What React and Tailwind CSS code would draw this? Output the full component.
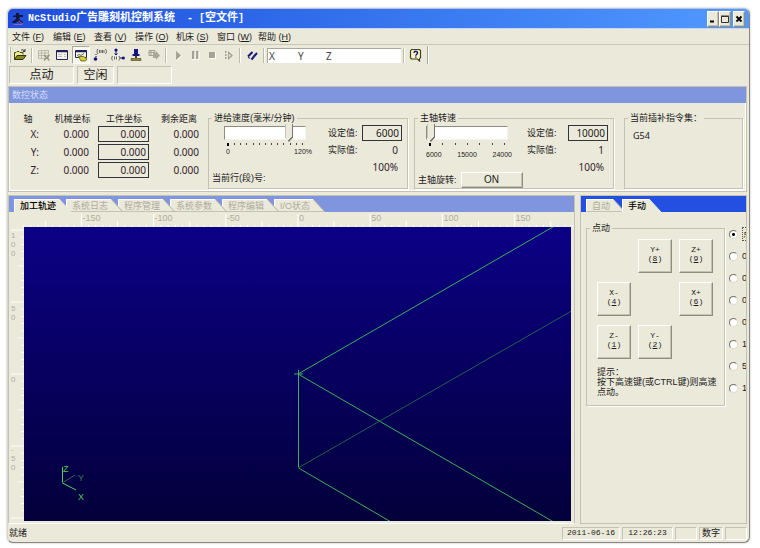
import React from "react";

const MENUS = [
  ["文件", "F"],
  ["编辑", "E"],
  ["查看", "V"],
  ["操作", "O"],
  ["机床", "S"],
  ["窗口", "W"],
  ["帮助", "H"],
];

const AXES = ["X", "Y", "Z"];

const VIEW_TABS = [
  { label: "加工轨迹", active: true, z: "z-60" },
  { label: "系统日志", z: "z-50" },
  { label: "程序管理", z: "z-40" },
  { label: "系统参数", z: "z-30" },
  { label: "程序编辑", z: "z-20" },
  { label: "I/O状态", z: "z-10" },
];

const JOG_KEYS = [
  null, ["Y+", "8"], ["Z+", "9"],
  ["X-", "4"], null, ["X+", "6"],
  ["Z-", "1"], ["Y-", "2"], null,
];

const STEPS = ["点动", "0.01", "0.05", "0.1", "0.5", "1", "5", "10"];

function Icon({ children }) {
  return (
    <svg width="14" height="14" viewBox="0 0 14 14" fill="none" aria-hidden="true" className="shrink-0">
      {children}
    </svg>
  );
}

const ICONS = {
  open: (
    <Icon>
      <path d="M1.500 11.500V4.500H3l1-1h2l1 1h3v2" fill="#f0ec90" stroke="#4a4a10" />
      <path d="M1.500 11.500l2.500-4h9l-3 4z" fill="#8a8a1c" stroke="#33330a" />
      <path d="M8 2.500c1-1.200 2.500-1 3.500.500M12 1v2.500H9.800" stroke="#222" strokeWidth=".9" />
    </Icon>
  ),
  gridOff: (
    <Icon>
      <path d="M1.500 2.500h10v8h-10zM1.500 5h10M1.500 7.500h10M4.500 3v7.500M8 3v7.500" stroke="#bcbaac" />
      <path d="M7 7l5.500 5.500M12.500 7L7 12.500" stroke="#949284" strokeWidth="1.300" />
    </Icon>
  ),
  window: (
    <Icon>
      <path d="M1.500 2.500h11v9h-11z" fill="#f4f3ea" stroke="#25254e" />
      <path d="M1 3.500h12" stroke="#1c1c5e" strokeWidth="1.600" />
      <path d="M3 6.500h4M3 8.500h4M9 6.500h2M9 8.500h2" stroke="#bbb" />
    </Icon>
  ),
  trace: (
    <Icon>
      <path d="M1.500 2.500h11v7h-11z" fill="#f4f3ea" stroke="#25254e" />
      <path d="M1 3.500h12" stroke="#1c1c5e" strokeWidth="1.500" />
      <path d="M3 7.500l2-1 2 1 3-2" stroke="#666" />
      <path d="M4.500 8.500h5l3.500 2.500-1.500 2H7z" fill="#d8ce30" stroke="#5c5a10" strokeWidth=".8" />
    </Icon>
  ),
  origin: (
    <Icon>
      <path d="M5 1c-1.300 1.500-1.300 3.500 0 5M12.500 1c1.300 1.500 1.300 3.500 0 5M6.500 2v3M8 2v3M9.500 2v3M11 2v3" stroke="#444" strokeWidth=".8" />
      <path d="M3 6v4" stroke="#10107c" strokeDasharray="1 1" />
      <circle cx="2.500" cy="11" r="1.800" fill="#10107c" />
    </Icon>
  ),
  home: (
    <Icon>
      <circle cx="5" cy="2" r="1.600" fill="#10107c" />
      <path d="M5 3v4M3.500 5.500L5 7l1.500-1.500M9 10h3" stroke="#10107c" />
      <path d="M1.500 8c-1 1.500-1 3 0 4.500M3.500 8.500v3M5.500 8.500v3M8 8c1 1.500 1 3 0 4.500" stroke="#444" strokeWidth=".8" />
      <circle cx="12.300" cy="10" r="1.600" fill="#10107c" />
    </Icon>
  ),
  tool: (
    <Icon>
      <path d="M5 1h4v5H5zM3.500 6h7v2h-7z" fill="#15157e" />
      <path d="M6 8h2v2H6z" fill="#444" />
      <path d="M2 10.500h10v2H2z" fill="#8b8830" stroke="#4c4a22" strokeWidth=".6" />
    </Icon>
  ),
  sim: (
    <Icon>
      <path d="M2 2.500h6v5H2zM2 4.500h6M4 2v5" stroke="#a19f90" />
      <path d="M6 5h3V3l4 4.500L9 12v-2H6z" fill="#aaa899" />
    </Icon>
  ),
  play: <Icon><path d="M5 3l5 4.500L5 12z" fill="#a5a394" /><path d="M5.500 12.500l5-4.500" stroke="#fff" /></Icon>,
  pause: <Icon><path d="M4 3h2.500v8H4zM8 3h2.500v8H8z" fill="#a5a394" /><path d="M7 4v7.500H4.500M11 4v7.500H8.500" stroke="#fff" /></Icon>,
  stop: <Icon><path d="M4 4h6v6H4z" fill="#a5a394" /><path d="M10.500 4.500v6h-6" stroke="#fff" /></Icon>,
  step: (
    <Icon>
      <path d="M3 3h1.500v2H3zM3 6h1.500v2H3zM3 9h1.500v2H3zM6 3l5 4.500L6 12z" fill="#a5a394" />
      <path d="M7 6v3l2-1.500z" fill="#ebe9d9" />
    </Icon>
  ),
  erase: (
    <Icon>
      <path d="M3 8.500L7.500 4M6.500 11.500L12 5" stroke="#15157e" strokeWidth="2" />
      <path d="M3 9l2 1.500M7.500 9.500L10 6" stroke="#44446e" strokeWidth="1.200" />
    </Icon>
  ),
  help: (
    <Icon>
      <path d="M2.500 1.500h8l1 1v7l-1 1.500v2l-2-2h-6l-1-1v-7z" fill="#f7f5c8" stroke="#43431c" strokeWidth="1.200" />
      <path d="M5 5c0-2.300 3.500-2.300 3.500 0 0 1.200-1.700 1.300-1.700 2.700M6.800 8.500v1.300" stroke="#15156e" strokeWidth="1.400" />
    </Icon>
  ),
};

function ToolButton({ name, label, pressed, narrow }) {
  return (
    <button
      type="button"
      aria-label={label}
      className={
        "flex h-[18px] items-center justify-center " +
        (narrow ? "w-[17px] " : "w-[18px] ") +
        (pressed ? "mx-px border border-t-[#aaa899] border-l-[#aaa899] border-r-white border-b-white bg-[#f6f5ee]" : "")
      }
    >
      {ICONS[name]}
    </button>
  );
}

function Sep() {
  return <span className="mx-[2px] h-[15px] w-[2px] border-l border-[#bdbbac] bg-white" />;
}

function Group({ title, className, children }) {
  return (
    <fieldset className={"min-w-0 border border-[#c3c2b3] shadow-[1px_1px_0_#fff] " + className}>
      <legend className="ml-[3px] px-[2px] leading-3">{title}</legend>
      {children}
    </fieldset>
  );
}

function Slider({ label, min, max, value }) {
  return (
    <input
      type="range"
      aria-label={label}
      min={min}
      max={max}
      defaultValue={value}
      className="block h-[18px] w-[82px] appearance-none bg-transparent [&::-webkit-slider-runnable-track]:h-[14px] [&::-webkit-slider-runnable-track]:border [&::-webkit-slider-runnable-track]:border-t-[#8f8d80] [&::-webkit-slider-runnable-track]:border-l-[#8f8d80] [&::-webkit-slider-runnable-track]:border-r-[#f4f3ea] [&::-webkit-slider-runnable-track]:border-b-[#f4f3ea] [&::-webkit-slider-runnable-track]:bg-white [&::-webkit-slider-thumb]:-mt-[3px] [&::-webkit-slider-thumb]:h-[18px] [&::-webkit-slider-thumb]:w-[8px] [&::-webkit-slider-thumb]:appearance-none [&::-webkit-slider-thumb]:border-r [&::-webkit-slider-thumb]:border-l [&::-webkit-slider-thumb]:border-l-[#c3c2b3] [&::-webkit-slider-thumb]:border-r-[#77756a] [&::-webkit-slider-thumb]:bg-[linear-gradient(135deg,#ebe9d9_76%,#77756a_76%)] [&::-webkit-slider-thumb]:[clip-path:polygon(0_0,100%_0,100%_75%,50%_100%,0_75%)]"
    />
  );
}

function Ticks({ count }) {
  return (
    <div className="flex w-[82px] justify-between px-[3px] py-px">
      {Array.from({ length: count }, (_, i) => (
        <span key={i} className={i === 0 ? "h-[3px] w-[2px] bg-black" : "h-[2px] w-px bg-[#444]"} />
      ))}
    </div>
  );
}

function Readouts({ id, value, actual, labelWidth }) {
  return (
    <div className="grid flex-1 content-start pr-[5px] font-['Noto_Sans','Noto_Sans_CJK_SC',sans-serif]">
      <div className="flex h-[17px] items-center">
        <label htmlFor={id} className={"shrink-0 text-[9px] " + labelWidth}>设定值:</label>
        <input
          id={id}
          defaultValue={value}
          className="h-[16px] w-[40px] border border-[#33333c] bg-transparent pr-[2px] text-right text-[10px]"
        />
      </div>
      <div className="flex h-[17px] items-center justify-between pr-[4px]">
        <span className="text-[9px]">实际值:</span>
        <span className="text-[10px] text-[#33232f]">{actual}</span>
      </div>
      <div className="flex h-[17px] items-center justify-end pr-[4px] text-[10px] text-[#33232f]">100%</div>
    </div>
  );
}

function Tab({ label, active, z }) {
  return (
    <button type="button" role="tab" aria-selected={!!active} className={"-mr-[5px] flex h-[13px] " + z}>
      <span
        className={
          "h-full border-t border-l border-white bg-[#ebe9d9] pr-[3px] pl-[5px] text-[9px] leading-[12px] whitespace-nowrap " +
          (active ? "font-medium text-black" : "border-b border-b-[#c3c2b3] text-[#aeac9e]")
        }
      >
        {label}
      </span>
      <svg width="12" height="13" viewBox="0 0 12 13" aria-hidden="true">
        <path d="M0 0L12 13H0z" fill="#ebe9d9" />
        <path d="M0 0L12 13" stroke={active ? "#ebe9d9" : "#b5b3a4"} />
        {!active && <path d="M0 12.500h11" stroke="#c3c2b3" />}
      </svg>
    </button>
  );
}

function TopRuler() {
  const ticks = Array.from({ length: 160 }, (_, i) => i - 38);
  return (
    <svg className="block h-[15px] w-full" aria-hidden="true">
      {ticks.map((n) => {
        const x = 289 + n * 7.22;
        const len = n % 10 === 0 ? 13 : n % 5 === 0 ? 6 : 2;
        return <path key={n} d={`M${x} 15V${15 - len}`} stroke="#fff" />;
      })}
      {[-150, -100, -50, 0, 50, 100, 150].map((v) => (
        <text key={v} x={290 + v * 1.444} y="9" fontSize="9" fill="#b0ae9f">{v}</text>
      ))}
    </svg>
  );
}

function SideRuler() {
  const ticks = Array.from({ length: 120 }, (_, i) => i - 20);
  return (
    <svg className="block w-[15px] shrink-0" aria-hidden="true">
      {ticks.map((n) => {
        const y = 147 + n * 7.2;
        const len = n % 10 === 0 ? 13 : n % 5 === 0 ? 6 : 3;
        return <path key={n} d={`M15 ${y}H${15 - len}`} stroke="#fff" />;
      })}
      {[
        ["1", 11], ["0", 20], ["0", 29],
        ["5", 84], ["0", 93],
        ["0", 155],
        ["-", 225], ["5", 234], ["0", 243],
      ].map(([t, y]) => (
        <text key={y} x="2" y={y} fontSize="8" fill="#b0ae9f">{t}</text>
      ))}
    </svg>
  );
}

function ToolPath() {
  return (
    <svg
      className="block min-w-0 flex-1 overflow-hidden bg-linear-to-b from-[#0c0086] to-[#03003a]"
      role="img"
      aria-label="加工轨迹"
    >
      <g fill="none" stroke="#3fae5c">
        <path d="M274 147L1314 -453M274 147L1314 749M274.500 147V241L1314 847M270 147h9M274.500 143v9" />
        <path d="M274 241L1314 -356" stroke="#23604e" />
        <path d="M38.500 240V256L52 263" stroke="#58cf62" />
        <path d="M38 256L51 248" stroke="#28664c" />
      </g>
      <g fontSize="9" fill="#4fc45c">
        <text x="39" y="245">Z</text>
        <text x="54" y="254" fill="#28804c">Y</text>
        <text x="54" y="273">X</text>
      </g>
    </svg>
  );
}

function StatusCell({ className, children }) {
  return (
    <span
      className={
        "flex h-[13px] items-center justify-center border border-t-[#c3c2b3] border-l-[#c3c2b3] border-r-white border-b-white " +
        className
      }
    >
      {children}
    </span>
  );
}

const RAISED =
  "border border-t-white border-l-white border-r-[#8f8d80] border-b-[#8f8d80] bg-[#ebe9d9] shadow-[inset_-1px_-1px_0_#c3c2b3]";
const SUNKEN = "border border-t-[#c3c2b3] border-l-[#c3c2b3] border-r-white border-b-white";

export default function App() {
  return (
    <div className="flex min-h-screen flex-col bg-white pt-2 pr-[10px] pb-[5px] pl-[7px] font-['Liberation_Sans','Noto_Sans_CJK_SC',sans-serif] text-[9px] leading-3 text-[#1c1c1c]">
      <div className="flex flex-1 flex-col overflow-hidden rounded-md border border-t-[#b9c3d8] border-r-[#8b897f] border-b-[#8b897f] border-l-[#d8d6ca] bg-[#ebe9d9] shadow-[0_0_2px_#aaa]">
        <header className="flex h-[20px] items-center border-b border-[#c3d6f4] bg-linear-to-r from-[#1f4cdc] to-[#5299ff] pr-[4px] pl-[3px]">
          <svg width="14" height="14" viewBox="0 0 14 14" aria-hidden="true">
            <path d="M5 1h3v2h4v2H9l-1 2 4 3v1H9L7 9l-2 2H1v-1l4-3V5H2V4l3-1z" fill="#161638" />
            <path d="M2 12h10l-1 1H3z" fill="#8b6aa8" />
            <path d="M8 9l4 3" stroke="#c05080" />
          </svg>
          <h1 className="ml-[3px] flex-1 font-['Liberation_Mono','Noto_Sans_CJK_SC',monospace] text-[10px] font-bold whitespace-pre text-white">
            NcStudio<span className="text-[11px]">广告雕刻机控制系统</span>{"  - ["}
            <span className="text-[11px]">空文件</span>]
          </h1>
          <div className="flex">
            <button type="button" aria-label="最小化" className={"flex h-[16px] w-[12px] items-center justify-center " + RAISED}>
              <svg width="8" height="8"><path d="M1 6.500h4" stroke="#000" strokeWidth="2" /></svg>
            </button>
            <button type="button" aria-label="最大化" className={"flex h-[16px] w-[12px] items-center justify-center " + RAISED}>
              <svg width="8" height="8" fill="none"><path d="M.5 1.500h7v6h-7zM0 1h8" stroke="#33332c" /></svg>
            </button>
            <button type="button" aria-label="关闭" className={"ml-[2px] flex h-[16px] w-[12px] items-center justify-center " + RAISED}>
              <svg width="8" height="8"><path d="M1.500 1.500l5 5M6.500 1.500l-5 5" stroke="#000" strokeWidth="1.800" /></svg>
            </button>
          </div>
        </header>

        <nav className="flex h-[16px] items-center border-b border-[#c9c7b8] pl-[4px]">
          {MENUS.map(([name, key]) => (
            <button key={key} type="button" className="w-[41px] text-left whitespace-nowrap">
              {name} (<u>{key}</u>)
            </button>
          ))}
        </nav>

        <div className="flex h-[20px] items-center">
          <span className="ml-px h-[16px] w-[2px] border-r border-[#bdbbac] bg-white" />
          <ToolButton name="open" label="打开" />
          <Sep />
          <ToolButton name="gridOff" label="清除" />
          <ToolButton name="window" label="窗口" />
          <ToolButton name="trace" label="轨迹" pressed />
          <ToolButton name="origin" label="设原点" />
          <ToolButton name="home" label="回原点" />
          <ToolButton name="tool" label="对刀" />
          <ToolButton name="sim" label="仿真" />
          <Sep />
          <ToolButton name="play" label="开始" narrow />
          <ToolButton name="pause" label="暂停" narrow />
          <ToolButton name="stop" label="停止" narrow />
          <ToolButton name="step" label="断点继续" narrow />
          <Sep />
          <ToolButton name="erase" label="高级加工" />
          <Sep />
          <div className="flex h-[15px] w-[134px] items-center border-t border-l border-[#aaa899] bg-white pl-px font-['Noto_Sans',sans-serif] text-[10px] text-[#444]">
            <span className="w-[29px]">X</span>
            <span className="w-[28px]">Y</span>
            <span>Z</span>
          </div>
          <Sep />
          <ToolButton name="help" label="帮助" />
          <span className="ml-[2px] h-[18px] w-[2px] border-l border-[#aaa899] bg-white" />
        </div>

        <div className="flex h-[21px] items-start gap-[3px] pt-px pl-px text-[12px]">
          <span className={"flex h-[18px] w-[65px] items-center justify-center " + SUNKEN}>点动</span>
          <span className={"flex h-[18px] w-[37px] items-center justify-center " + SUNKEN}>空闲</span>
          <span className={"h-[18px] w-[55px] " + SUNKEN} />
        </div>

        <section className="mr-[2px] border border-[#c3c2b3] shadow-[inset_0_0_0_1px_#fff]">
          <h2 className="h-[16px] bg-[#7f95de] pl-[3px] leading-[16px] text-[#d5def8]">数控状态</h2>
          <div className="flex h-[88px] items-start pt-[9px] pr-[3px]">
            <table className="w-[199px] shrink-0 table-fixed border-collapse font-['Noto_Sans','Noto_Sans_CJK_SC',sans-serif]">
              <thead>
                <tr className="h-[13px] text-center">
                  <th className="w-[38px] p-0 font-normal">轴</th>
                  <th className="w-[51px] p-0 font-normal">机械坐标</th>
                  <th className="w-[52px] p-0 font-normal">工件坐标</th>
                  <th className="p-0 font-normal">剩余距离</th>
                </tr>
              </thead>
              <tbody className="text-[10px] text-[#33232f]">
                {AXES.map((axis) => (
                  <tr key={axis} className="h-[18px]">
                    <th className="p-0 pr-[8px] text-right font-normal">{axis}:</th>
                    <td className="p-0 pr-[9px] text-right">0.000</td>
                    <td className="p-0">
                      <input
                        aria-label={`${axis} 工件坐标`}
                        defaultValue="0.000"
                        className="block h-[16px] w-[51px] border border-[#33333c] bg-transparent pr-[2px] text-right"
                      />
                    </td>
                    <td className="p-0 pr-[9px] text-right">0.000</td>
                  </tr>
                ))}
              </tbody>
            </table>

            <Group title="进给速度(毫米/分钟)" className="h-[77px] w-[200px] shrink-0">
              <div className="flex h-[64px]">
                <div className="flex w-[119px] flex-col pl-[15px]">
                  <Slider label="进给速度" min="0" max="120" value="100" />
                  <Ticks count={13} />
                  <div className="flex w-[88px] justify-between pl-[2px] text-[7px] leading-[10px]">
                    <span>0</span>
                    <span>120%</span>
                  </div>
                  <p className="-ml-[12px] mt-auto mb-[4px]">当前行(段)号:</p>
                </div>
                <Readouts id="feed" value="6000" actual="0" labelWidth="w-[34px]" />
              </div>
            </Group>

            <Group title="主轴转速" className="ml-[6px] h-[77px] w-[200px] shrink-0">
              <div className="flex h-[64px]">
                <div className="flex w-[113px] flex-col pl-[11px]">
                  <Slider label="主轴转速" min="6000" max="24000" value="6000" />
                  <Ticks count={7} />
                  <div className="mt-[3px] flex w-[86px] justify-between text-[7px] leading-[10px]">
                    <span>6000</span>
                    <span>15000</span>
                    <span>24000</span>
                  </div>
                  <div className="-ml-[8px] mt-auto flex items-center gap-[4px] whitespace-nowrap">
                    <span>主轴旋转:</span>
                    <button type="button" className={"h-[16px] w-[62px] shrink-0 text-[10px] leading-none " + RAISED}>ON</button>
                  </div>
                </div>
                <Readouts id="spindle" value="10000" actual="1" labelWidth="w-[41px]" />
              </div>
            </Group>

            <Group title="当前插补指令集：" className="ml-[10px] h-[77px] flex-1">
              <p className="pt-[6px] pl-[8px] font-['Noto_Sans',sans-serif]">G54</p>
            </Group>
          </div>
        </section>

        <main className="mt-[3px] mr-[2px] flex min-h-0 flex-1 gap-[5px]">
          <section className="flex min-w-0 flex-1 flex-col border border-[#c3c2b3] border-b-white">
            <div role="tablist" className="flex h-[16px] shrink-0 items-end bg-[#7f95de] pl-[5px]">
              {VIEW_TABS.map((t) => <Tab key={t.label} {...t} />)}
            </div>
            <TopRuler />
            <div className="flex min-h-0 flex-1 pr-[3px] pb-[2px]">
              <SideRuler />
              <ToolPath />
            </div>
          </section>

          <aside className="flex w-[167px] shrink-0 flex-col overflow-hidden border border-[#c3c2b3]">
            <div role="tablist" className="flex h-[16px] shrink-0 items-end gap-[2px] bg-[#2350e0] pl-[5px]">
              <Tab label="自动" z="z-10" />
              <Tab label="手动" active z="z-20" />
            </div>
            <div className="flex items-start pt-[10px] pl-[5px]">
              <Group title="点动" className="h-[184px] w-[139px] shrink-0">
                <div className="grid grid-cols-[34px_34px_34px] gap-x-[7px] gap-y-[9px] pt-[5px] pl-[10px]">
                  {JOG_KEYS.map((k, i) =>
                    k ? (
                      <button
                        key={i}
                        type="button"
                        className={"h-[34px] pb-[4px] font-['Liberation_Mono',monospace] text-[8px] leading-[9px] " + RAISED}
                      >
                        {k[0]}
                        <br />(<u>{k[1]}</u>)
                      </button>
                    ) : (
                      <span key={i} />
                    )
                  )}
                </div>
                <p className="mt-[8px] pl-[10px] leading-[10px] whitespace-nowrap">
                  提示：
                  <br />
                  按下高速键(或CTRL键)则高速
                  <br />
                  点动。
                </p>
              </Group>
              <div className="ml-[4px] shrink-0 pt-px">
                {STEPS.map((s, i) => (
                  <label key={s} className="flex h-[22px] items-center gap-[4px] whitespace-nowrap">
                    <input
                      type="radio"
                      name="step"
                      defaultChecked={i === 0}
                      className="size-[9px] appearance-none rounded-full border border-t-[#77756a] border-r-[#dddbcc] border-b-[#dddbcc] border-l-[#77756a] bg-white checked:bg-[radial-gradient(circle,#000_1px,#fff_2px)]"
                    />
                    <span className={i === 0 ? "border border-dotted border-[#555]" : ""}>{s}</span>
                  </label>
                ))}
              </div>
            </div>
          </aside>
        </main>

        <footer className="flex h-[18px] shrink-0 items-center gap-[2px] pr-[2px] pl-px">
          <span className="flex-1">就绪</span>
          <StatusCell className="w-[58px] font-['Liberation_Mono',monospace] text-[8px]">2011-06-16</StatusCell>
          <StatusCell className="w-[51px] font-['Liberation_Mono',monospace] text-[8px]">12:26:23</StatusCell>
          <StatusCell className="w-[22px]" />
          <StatusCell className="w-[24px]">数字</StatusCell>
          <StatusCell className="w-[22px]" />
        </footer>
      </div>
    </div>
  );
}
